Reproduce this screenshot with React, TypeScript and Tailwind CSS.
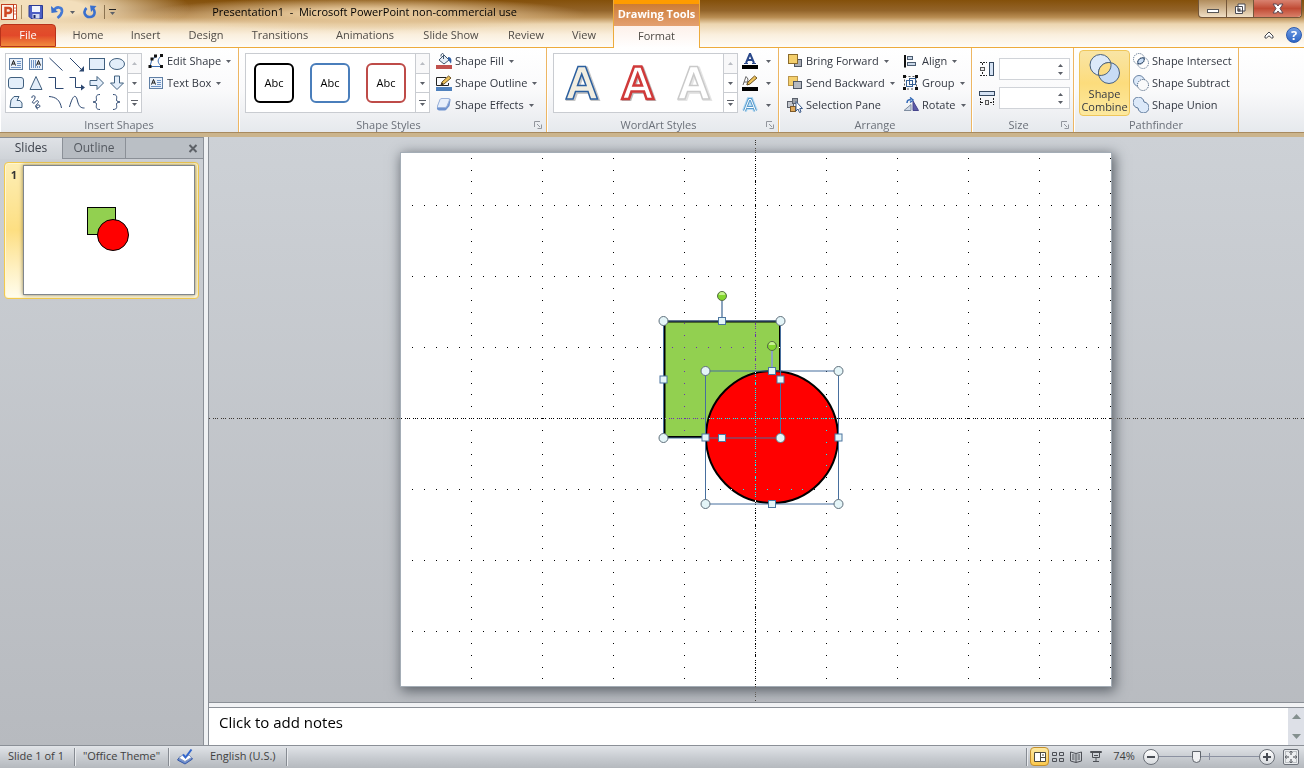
import type { ReactNode } from "react";

const shapeFill = "#e3eefa";
const shapeLine = "#41607f";

const galleryShapes: { name: string; icon: ReactNode }[] = [
  {
    name: "Text Box",
    icon: (
      <>
        <rect x="1.5" y="2.5" width="13" height="11" fill="#eaf1fa" stroke="#5f7fa5" />
        <path d="M3.5 9.5 L5.5 4.5 L7.5 9.5 M4.5 8 H6.5" fill="none" stroke="#111" />
        <path d="M9 5.5 H13 M9 7.5 H13 M3 9.5 M9 9.5 H13 M3 11.5 H13" stroke="#6f93c4" />
      </>
    ),
  },
  {
    name: "Vertical Text Box",
    icon: (
      <>
        <rect x="1.5" y="2.5" width="13" height="11" fill="#eaf1fa" stroke="#5f7fa5" />
        <path d="M8.5 9.5 L10.5 4.5 L12.5 9.5 M9.5 8 H11.5" fill="none" stroke="#111" />
        <path d="M3.5 4 V12 M5.5 4 V12 M7.5 4 V12 M9.5 10 V12 M11.5 10 V12" stroke="#6f93c4" />
      </>
    ),
  },
  { name: "Line", icon: <path d="M1.5 2 L14.5 14.5" stroke="#2c4770" /> },
  {
    name: "Arrow",
    icon: (
      <>
        <path d="M1 2 L13 14" stroke="#2c4770" />
        <path d="M15 15.5 V10 L10 15.5 Z" fill="#2c4770" />
      </>
    ),
  },
  { name: "Rectangle", icon: <rect x="0.5" y="2.5" width="15" height="11" fill={shapeFill} stroke={shapeLine} /> },
  { name: "Oval", icon: <ellipse cx="8" cy="8" rx="7.5" ry="5.5" fill={shapeFill} stroke={shapeLine} /> },
  { name: "Rounded Rectangle", icon: <rect x="0.5" y="2.5" width="15" height="11" rx="2.5" fill={shapeFill} stroke={shapeLine} /> },
  { name: "Triangle", icon: <path d="M8 1.5 L14 14.5 H2 Z" fill={shapeFill} stroke={shapeLine} /> },
  { name: "Elbow Connector", icon: <path d="M0.5 2.5 H7.5 V13.5 H15.5" fill="none" stroke="#2c4770" /> },
  {
    name: "Elbow Arrow",
    icon: (
      <>
        <path d="M0.5 2.5 H6.5 V12.5 H13" fill="none" stroke="#2c4770" />
        <path d="M12 9.5 L16 12.5 L12 15.5 Z" fill="#2c4770" />
      </>
    ),
  },
  { name: "Right Arrow", icon: <path d="M1 5.5 H8 V1.5 L14.5 8 L8 14.5 V10.5 H1 Z" fill={shapeFill} stroke={shapeLine} /> },
  { name: "Down Arrow", icon: <path d="M5.5 1 V8 H1.5 L8 14.5 L14.5 8 H10.5 V1 Z" fill={shapeFill} stroke={shapeLine} /> },
  { name: "Freeform", icon: <path d="M2 13.5 L3 6 L6 2.5 H11 L9 6.5 H12 L14 9 V13.5 Z" fill={shapeFill} stroke={shapeLine} /> },
  {
    name: "Scribble",
    icon: <path d="M4 4 C3 1 8 1 7 4 C6 7 3 8 5 9 C8 10 8 5 10 7 C12 9 6 11 8 13 C10 15 14 12 11 11 C8 10 7 15 10 15" fill="none" stroke="#2c4770" />,
  },
  { name: "Arc", icon: <path d="M1 2.5 C8 3 12 6 13.5 14" fill="none" stroke="#2c4770" /> },
  { name: "Curve", icon: <path d="M0.5 13 C4 0 7 0 8.5 7 C10 13 12 14 15.5 14" fill="none" stroke="#2c4770" /> },
  { name: "Left Brace", icon: <path d="M11 0.5 C6 0.5 7.500 4 7.500 6 C7.500 7.500 5 8 4 8 C5 8 7.500 8.500 7.500 10 C7.500 12 6 15.5 11 15.5" fill="none" stroke="#2c4770" /> },
  { name: "Right Brace", icon: <path d="M4 0.5 C9 0.5 7.500 4 7.500 6 C7.500 7.500 10 8 11 8 C10 8 7.500 8.500 7.500 10 C7.500 12 9 15.5 4 15.5" fill="none" stroke="#2c4770" /> },
];

const tabs = [
  { name: "Home", width: "w-[58px]" },
  { name: "Insert", width: "w-[57px]" },
  { name: "Design", width: "w-16" },
  { name: "Transitions", width: "w-[84px]" },
  { name: "Animations", width: "w-[86px]" },
  { name: "Slide Show", width: "w-[86px]" },
  { name: "Review", width: "w-16" },
  { name: "View", width: "w-[52px]" },
];

function Icon({ children, size = 16 }: { children: ReactNode; size?: number }) {
  return (
    <svg width={size} height={size} viewBox="0 0 16 16" fill="none" className="shrink-0" aria-hidden="true">
      {children}
    </svg>
  );
}

function Caret({ up = false, light = false }: { up?: boolean; light?: boolean }) {
  return (
    <svg width="5" height="3" viewBox="0 0 5 3" className="shrink-0" aria-hidden="true">
      <path d={up ? "M0 3 L2.5 0 L5 3 Z" : "M0 0 L2.5 3 L5 0 Z"} fill={light ? "#b9bcc2" : "#5c6068"} />
    </svg>
  );
}

function RibbonGroup({ label, launcher, className, children }: { label: string; launcher?: boolean; className: string; children: ReactNode }) {
  return (
    <section
      aria-label={label}
      className={`flex shrink-0 flex-col border-r border-[#edb663] shadow-[inset_1px_0_0_#ffffff] ${className}`}
    >
      <div className="flex h-[69px] items-start pt-0.5">{children}</div>
      <div className="flex h-[15px] items-center px-1 text-[#6b7079]">
        <span className="flex-1 text-center leading-[15px]">{label}</span>
        {launcher && (
          <button type="button" aria-label={`${label} options`}>
            <svg width="8" height="8" viewBox="0 0 8 8" fill="none">
              <path d="M0.5 6 V0.5 H6 M3 3 L6 6 M7.5 3.5 V7.5 H3.5" stroke="#92969d" />
            </svg>
          </button>
        )}
      </div>
    </section>
  );
}

function ToolButton({ icon, label, menu = true }: { icon: ReactNode; label: string; menu?: boolean }) {
  return (
    <button type="button" className="flex h-[22px] items-center gap-[3px] whitespace-nowrap text-[#333842]">
      <Icon>{icon}</Icon>
      <span>{label}</span>
      {menu && <span className="pl-0.5"><Caret /></span>}
    </button>
  );
}

function GalleryScroller() {
  return (
    <div className="flex w-3.5 shrink-0 flex-col border-l border-[#c9ccd1]">
      <button type="button" aria-label="Previous row" className="flex flex-1 items-center justify-center bg-[#f8f8f9]"><Caret up light /></button>
      <button type="button" aria-label="Next row" className="flex flex-1 items-center justify-center border-y border-[#c9ccd1]"><Caret /></button>
      <button type="button" aria-label="More" className="flex flex-1 flex-col items-center justify-center gap-0.5">
        <span className="h-px w-[7px] bg-[#5c6068]" />
        <Caret />
      </button>
    </div>
  );
}

function WordArt({ fill, stroke, glow, weight, name }: { fill: string; stroke: string; glow: string; weight: number; name: string }) {
  return (
    <button type="button" aria-label={name} className="flex h-full w-14 items-center justify-center">
      <svg width="40" height="42" viewBox="0 0 40 42" aria-hidden="true">
        <path
          d="M17.500 5.500 H25 L37 38 H29.500 L27.500 31 H15 L12.500 38 H5 Z M21.200 13 L17 25 H25.500 Z"
          fill={glow}
          stroke={glow}
          strokeWidth="2"
          fillRule="evenodd"
          opacity="0.3"
        />
        <path d="M16 4.500 H23.500 L35.500 37 H28.500 L26 29.500 H13.500 L11 37 H4 Z M19.700 12 L15.500 23.500 H24 Z" fill={fill} fillRule="evenodd" stroke={stroke} strokeWidth={weight} />
      </svg>
    </button>
  );
}

function SizeField({ id, label, icon }: { id: string; label: string; icon: ReactNode }) {
  return (
    <div className="flex items-center gap-1">
      <label htmlFor={id} title={label}><Icon>{icon}</Icon></label>
      <div className="flex h-[22px] w-[71px] border border-[#d0d3d8] bg-white">
        <input id={id} aria-label={label} className="w-0 flex-1 px-1 outline-none" />
        <div className="flex w-[18px] flex-col py-0.5">
          <button type="button" aria-label={`Increase ${label}`} className="flex flex-1 items-center justify-center"><Caret up /></button>
          <button type="button" aria-label={`Decrease ${label}`} className="flex flex-1 items-center justify-center"><Caret /></button>
        </div>
      </div>
    </div>
  );
}

function TitleBar() {
  return (
    <header className="flex h-12 shrink-0 overflow-hidden bg-[radial-gradient(ellipse_150px_30px_at_40px_8px,#f3dfbc_30%,transparent),radial-gradient(ellipse_220px_17px_at_365px_14px,#e3c496_30%,transparent),linear-gradient(#84500a,#93642a_22%,#b98d52_36%,#ecd5b0_50%,#faefdd_72%,#fffdf9)]">
      <div className="flex w-[613px] shrink-0 flex-col border-b border-[#edab3c]">
        <div className="flex h-6 items-center">
          <div className="flex w-[120px] shrink-0 items-center pl-px">
            <Icon>
              <path d="M4 0.5 H15.5 V15.5 H4" fill="#fff" stroke="#c85232" />
              <rect x="0.5" y="0.5" width="12" height="15" fill="#fbeee6" stroke="#c23d1e" />
              <path d="M4.5 13 V4 H7.500 C11 4 11 9 7.500 9 H4.500" stroke="#cf4722" strokeWidth="2.500" />
              <path d="M13 4 H15 M13 7 H15 M13 10 H15" stroke="#dc8266" />
            </Icon>
            <span className="ml-1 h-3.5 w-px bg-[#a58c64]" />
            <button type="button" aria-label="Save" className="ml-1.5">
              <Icon>
                <path d="M1 1.500 H14.500 V14.500 H3 L1 12.500 Z" fill="#4c5fc4" stroke="#2c3c94" />
                <rect x="4" y="2" width="8" height="6" fill="#f2f6fd" />
                <rect x="4.500" y="10" width="7" height="4.500" fill="#d3daf0" />
                <rect x="5.500" y="11" width="2" height="3" fill="#1c2a6b" />
              </Icon>
            </button>
            <button type="button" aria-label="Undo" className="ml-1.5">
              <Icon>
                <path d="M4 6.500 C6 2 12.500 2.500 12 7.500 C11.500 10.500 9.500 12.500 7.500 14" stroke="#4478d4" strokeWidth="2.600" />
                <path d="M1 2 L1.500 9 L8 8 Z" fill="#3a70ce" />
              </Icon>
            </button>
            <button type="button" aria-label="Undo list" className="ml-1"><Caret /></button>
            <button type="button" aria-label="Repeat" className="ml-[7px]">
              <Icon>
                <path d="M4.500 4 C0 8.500 4 13.500 8 13 C12.500 13 14 8 11 4.500" stroke="#3a70ce" strokeWidth="2.600" />
                <path d="M14.500 2 L8 1.500 L9 8 Z" fill="#3a70ce" />
              </Icon>
            </button>
            <span className="ml-1.5 h-3.5 w-px bg-[#8b7350]" />
            <button type="button" aria-label="Customize Quick Access Toolbar" className="ml-1 flex flex-col items-center gap-0.5">
              <span className="h-px w-[7px] bg-[#222]" />
              <Caret />
            </button>
          </div>
          <h1 className="flex-1 whitespace-pre pr-1 text-center text-[11px] text-black">Presentation1  -  Microsoft PowerPoint non-commercial use</h1>
        </div>
        <nav className="flex h-[23px] text-[11px] text-[#4f4b46]">
          <button type="button" className="w-14 shrink-0 rounded-t-sm border border-[#b8321a] bg-linear-to-b from-[#e0522c] via-[#e2492a] to-[#f08a3c] text-white">File</button>
          <span className="w-[3px] shrink-0" />
          {tabs.map((tab) => (
            <button key={tab.name} type="button" className={`shrink-0 whitespace-nowrap ${tab.width}`}>{tab.name}</button>
          ))}
        </nav>
      </div>
      <div className="flex w-[87px] shrink-0 flex-col border-x border-[#edab3c] text-center text-[11px]">
        <div className="h-[26px] border-t-4 border-[#ff9c00] bg-linear-to-b from-[#cd7c33] to-[#e4a070] pt-0.5 leading-4 font-bold whitespace-nowrap text-white">Drawing Tools</div>
        <button type="button" className="flex-1 bg-linear-to-b from-[#fdf1ea] to-white pb-0.5 text-[#4f4b46]">Format</button>
      </div>
      <div className="flex flex-1 flex-col items-end justify-between border-b border-[#edab3c]">
        <div className="mr-0.5 flex h-[18px] divide-x divide-[#74573a] rounded-b-sm border border-t-0 border-[#74573a] bg-linear-to-b from-[#b18d5d] to-[#f0dfc5]">
          <button type="button" aria-label="Minimize" className="flex w-7 items-end justify-center pb-1">
            <span className="h-1 w-3 border border-[#555] bg-white" />
          </button>
          <button type="button" aria-label="Restore" className="flex w-[27px] items-center justify-center">
            <svg width="12" height="12" viewBox="0 0 12 12" fill="none">
              <path d="M4 1 H11 V8 H4 Z M1.500 3.500 H8.500 V10.500 H1.500 Z" fill="#fff" stroke="#4a4a52" />
              <rect x="4" y="6" width="2" height="2" fill="#a68155" stroke="#4a4a52" />
            </svg>
          </button>
          <button type="button" aria-label="Close" className="flex w-[47px] items-center justify-center rounded-br-sm bg-linear-to-b from-[#d98270] via-[#c04a34] to-[#d98069]">
            <svg width="12" height="11" viewBox="0 0 12 11">
              <path d="M1 1 H4.500 L6 3 L7.500 1 H11 L8 5.500 L11 10 H7.500 L6 8 L4.500 10 H1 L4 5.500 Z" fill="#fff" stroke="#5d4650" />
            </svg>
          </button>
        </div>
        <div className="mb-1 flex items-center gap-3 pr-0.5">
          <button type="button" aria-label="Minimize the Ribbon">
            <svg width="10" height="8" viewBox="0 0 10 8" fill="#fff" stroke="#44464c">
              <path d="M5 1 L9 5 V7 H7.500 L5 4.800 L2.500 7 H1 V5 Z" />
            </svg>
          </button>
          <button type="button" aria-label="Help" className="size-4 rounded-full border border-[#2c5bb0] bg-linear-to-b from-[#6e9be2] to-[#2e66c6] text-[13px] leading-[14px] font-bold text-white">?</button>
        </div>
      </div>
    </header>
  );
}

const letterA = "M4 10 L8 0.500 L12 10 M5.500 7 H10.500";

function Ribbon() {
  return (
    <div className="flex h-[85px] shrink-0 overflow-hidden border-b border-[#a78a60] bg-linear-to-b from-white via-[#fafafb] to-[#e6e9ed] text-[11px]">
      <RibbonGroup label="Insert Shapes" className="w-[239px]">
        <div className="mt-[3px] ml-[5px] flex h-[60px] w-[137px] border border-[#c9ccd1] bg-white">
          <div className="grid flex-1 grid-cols-6">
            {galleryShapes.map((shape) => (
              <button key={shape.name} type="button" aria-label={shape.name} className="flex items-center justify-center">
                <Icon>{shape.icon}</Icon>
              </button>
            ))}
          </div>
          <GalleryScroller />
        </div>
        <div className="ml-1.5 flex flex-col">
          <ToolButton
            label="Edit Shape"
            icon={
              <>
                <path d="M2 13.500 L4 6 L8 4 M13.500 2.500 C9 7 9 9 13.500 13.500 H2" stroke="#3b6fb5" />
                <path d="M0.500 12 H3.500 V15 H0.500 Z M2.500 4.500 H5.500 V7.500 H2.500 Z M6 1.500 H9 V4.500 H6 Z M12 1 H15 V4 H12 Z M12 12 H15 V15 H12 Z" fill="#111" />
              </>
            }
          />
          <ToolButton label="Text Box" icon={galleryShapes[0].icon} />
        </div>
      </RibbonGroup>

      <RibbonGroup label="Shape Styles" launcher className="w-[308px]">
        <div className="mt-[3px] ml-1.5 flex h-[60px] w-[185px] border border-[#c9ccd1] bg-white">
          <div className="flex flex-1 items-center text-black">
            <button type="button" className="ml-2 h-10 w-10 rounded-md border-2 border-black">Abc</button>
            <button type="button" className="ml-4 h-10 w-10 rounded-md border-2 border-[#4a7ebb]">Abc</button>
            <button type="button" className="ml-4 h-10 w-10 rounded-md border-2 border-[#be4b48]">Abc</button>
          </div>
          <GalleryScroller />
        </div>
        <div className="ml-1.5 flex flex-col">
          <ToolButton
            label="Shape Fill"
            icon={
              <>
                <path d="M3 7 L8 2 L13 7 L8 11 Z" fill="#e5edf6" stroke="#41566e" />
                <path d="M7.500 6 V1.500 C7.500 -0.500 4.500 0.500 5 3.500" stroke="#41566e" />
                <path d="M12 4 C15.500 4 16 7 15 10.500 C13.500 9.500 13.500 7 12 7 Z" fill="#2f5fa5" />
                <rect y="12" width="16" height="4" fill="#c0504d" />
              </>
            }
          />
          <ToolButton
            label="Shape Outline"
            icon={
              <>
                <path d="M10 2.500 H0.500 V10.500 H12.500 V8" stroke="#222" />
                <path d="M5 10 L6 7 L12.500 1 L15 3 L8 9 Z" fill="#efc35a" stroke="#6d5323" />
                <path d="M5 10 L6 7.500 L7.500 9 Z" fill="#222" />
                <rect y="12" width="16" height="4" fill="#4f81bd" />
              </>
            }
          />
          <ToolButton
            label="Shape Effects"
            icon={
              <>
                <path d="M1 10 L4 2.500 Q4.500 1.500 6 1.500 H13 Q15 1.500 14.500 3 L13.500 9 L10.500 12.500 Q10 13.500 8.500 13.500 H3 Q0.500 13 1 10 Z" fill="#6f93d0" />
                <path d="M1.500 9 L4 2.500 Q4.500 1.500 6 1.500 H12 Q14 1.500 13.500 3 L11 9 Q10.500 10.500 9 10.500 H2.500 Q1 10.500 1.500 9 Z" fill="#e7effb" stroke="#9bb2da" />
              </>
            }
          />
        </div>
      </RibbonGroup>

      <RibbonGroup label="WordArt Styles" launcher className="w-[232px]">
        <div className="mt-[3px] ml-1.5 flex h-[60px] w-[185px] border border-[#c9ccd1] bg-white">
          <div className="flex flex-1 items-center">
            <WordArt name="Tan fill, blue outline" fill="#f1ede0" stroke="#2b5f9f" glow="#444444" weight={1.5} />
            <WordArt name="White fill, red outline" fill="#ffffff" stroke="#d03a3a" glow="#222222" weight={2.5} />
            <WordArt name="White fill, shadow" fill="#ffffff" stroke="#c9c9c9" glow="#aaaaaa" weight={1.5} />
          </div>
          <GalleryScroller />
        </div>
        <div className="ml-1 flex flex-col">
          <ToolButton
            label=""
            icon={
              <>
                <path d={letterA} stroke="#2c4a8c" strokeWidth="2" />
                <path d="M2 10.500 H6 M10 10.500 H14" stroke="#2c4a8c" />
                <rect y="12" width="16" height="4" fill="#000" />
              </>
            }
          />
          <ToolButton
            label=""
            icon={
              <>
                <path d="M1 10 L4 1.500 L6 4 L5 10 M2 7 H5" stroke="#666" />
                <path d="M5 10 L6 7 L12.500 1 L15 3 L8 9 Z" fill="#efc35a" stroke="#6d5323" />
                <rect y="12" width="16" height="4" fill="#000" />
              </>
            }
          />
          <ToolButton
            label=""
            icon={
              <>
                <path d="M2.500 14 L7 2.500 H9 L13.500 14 M4.500 10.500 H11.500" stroke="#b5dcf6" strokeWidth="5" />
                <path d="M2.500 14 L7 2.500 H9 L13.500 14 M4.500 10.500 H11.500" stroke="#5a9ccc" strokeWidth="3" />
                <path d="M2.500 14 L7 2.500 H9 L13.500 14 M4.500 10.500 H11.500" stroke="#fff" />
              </>
            }
          />
        </div>
      </RibbonGroup>

      <RibbonGroup label="Arrange" className="w-[193px]">
        <div className="ml-2 flex w-[116px] flex-col">
          <ToolButton
            label="Bring Forward"
            icon={
              <>
                <rect x="7.500" y="6.500" width="7" height="7" fill="#a9adb5" stroke="#4d5563" />
                <rect x="1.500" y="1.500" width="9" height="9" fill="#f4cf6c" stroke="#8a6a2a" />
              </>
            }
          />
          <ToolButton
            label="Send Backward"
            icon={
              <>
                <rect x="1.500" y="1.500" width="9" height="9" fill="#f4cf6c" stroke="#b9954b" />
                <rect x="6.500" y="6.500" width="8" height="7" fill="#b6bac1" stroke="#4d5563" />
              </>
            }
          />
          <ToolButton
            menu={false}
            label="Selection Pane"
            icon={
              <>
                <rect x="0.500" y="4.500" width="6" height="6" fill="#c2c6cd" stroke="#5b616b" />
                <rect x="5.500" y="1.500" width="5" height="5" fill="#9ca2ab" stroke="#5b616b" />
                <rect x="3.500" y="9.500" width="5" height="5" fill="#e0a95a" stroke="#7d5a28" />
                <path d="M9 4.500 V14 L11 12 L12.500 15.500 L14 15 L12.800 11.500 H15.500 Z" fill="#fff" stroke="#3c5c8c" />
              </>
            }
          />
        </div>
        <div className="flex flex-col">
          <ToolButton
            label="Align"
            icon={
              <>
                <path d="M2 2 V14.500" stroke="#111" strokeWidth="2" />
                <rect x="4.500" y="3.500" width="5" height="3" fill="#c9d7e8" stroke="#4b5c70" />
                <rect x="4.500" y="9.500" width="8" height="3" fill="#c9d7e8" stroke="#4b5c70" />
              </>
            }
          />
          <ToolButton
            label="Group"
            icon={
              <>
                <path d="M1.500 1.500 H13.500 V14 H1.500 Z" stroke="#555" strokeDasharray="2 2" />
                <rect x="3.500" y="5.500" width="6" height="6" stroke="#355f93" />
                <rect x="6.500" y="3.500" width="6" height="6" stroke="#355f93" />
                <path d="M0 0 H3 V3 H0 Z M12 0 H15 V3 H12 Z M0 12 H3 V15 H0 Z M12 12 H15 V15 H12 Z" fill="#111" />
              </>
            }
          />
          <ToolButton
            label="Rotate"
            icon={
              <>
                <path d="M1 13.500 L8 7.500 V13.500 Z" fill="#cfd8e6" stroke="#7f8da0" />
                <path d="M10 4 L15.500 13.500 H10 Z" fill="#5b5aa8" stroke="#46458c" />
                <path d="M4 6 C4 3 6 2.500 8 3 M7 0.500 L10 3 L7 5.500" stroke="#2f66b5" strokeWidth="1.500" />
              </>
            }
          />
        </div>
      </RibbonGroup>

      <RibbonGroup label="Size" launcher className="w-[102px]">
        <div className="mt-2 ml-[7px] flex flex-col gap-[7px]">
          <SizeField
            id="shape-height"
            label="Shape Height"
            icon={
              <>
                <rect x="10.500" y="1.500" width="4" height="13" fill="#d5e2f3" stroke="#33475f" />
                <path d="M1 1.500 H8 M1 14.500 H8 M3.500 2 V5 M3.500 11 V14" stroke="#222" strokeDasharray="2 1" />
                <rect x="1.500" y="6.500" width="4" height="3" fill="#eee" stroke="#555" />
              </>
            }
          />
          <SizeField
            id="shape-width"
            label="Shape Width"
            icon={
              <>
                <rect x="0.500" y="1.500" width="15" height="4" fill="#d5e2f3" stroke="#33475f" />
                <path d="M1.500 8 V15 M14.500 8 V15 M2 12.500 H5 M11 12.500 H14" stroke="#222" strokeDasharray="2 1" />
                <rect x="6.500" y="10.500" width="3" height="4" fill="#eee" stroke="#555" />
              </>
            }
          />
        </div>
      </RibbonGroup>

      <RibbonGroup label="Pathfinder" className="w-[165px]">
        <button type="button" className="ml-[5px] flex h-[66px] w-[51px] shrink-0 flex-col items-center rounded-sm border border-[#efc65a] bg-linear-to-b from-[#f9e5a5] via-[#fcdc7c] to-[#fce99f] text-[#333842]">
          <svg width="32" height="34" viewBox="0 0 32 34" aria-hidden="true" className="mt-0.5">
            <circle cx="11.500" cy="12" r="10.500" fill="#dce9f9" stroke="#48607e" />
            <circle cx="20" cy="20" r="10.500" fill="#c8dcf5" stroke="#48607e" />
            <path d="M9.700 22.300 A10.500 10.500 0 0 1 21.800 9.700 A10.500 10.500 0 0 1 9.700 22.300 Z" fill="#fbdc84" stroke="#48607e" />
          </svg>
          <span className="leading-[13px]">Shape Combine</span>
        </button>
        <div className="ml-[3px] flex flex-col">
          <ToolButton
            menu={false}
            label="Shape Intersect"
            icon={
              <>
                <circle cx="6" cy="6" r="5.500" stroke="#48607e" strokeDasharray="1 1" />
                <circle cx="10" cy="10" r="5.500" stroke="#48607e" strokeDasharray="1 1" />
                <path d="M5 10.500 C4 7 7 4.500 11 5 C12 8 9 11.500 5 10.500 Z" fill="#c8dcf5" stroke="#2d4868" />
              </>
            }
          />
          <ToolButton
            menu={false}
            label="Shape Subtract"
            icon={
              <>
                <circle cx="6" cy="6" r="5.500" fill="#dce9f9" stroke="#6a83a3" />
                <circle cx="10" cy="10" r="5.500" fill="#fafafb" stroke="#2d4868" strokeDasharray="1 1" />
              </>
            }
          />
          <ToolButton
            menu={false}
            label="Shape Union"
            icon={<path d="M11 5 A5.500 5.500 0 1 0 5 11 A5.500 5.500 0 1 0 11 5 Z" fill="#dce9f9" stroke="#5a7699" />}
          />
        </div>
      </RibbonGroup>
    </div>
  );
}

function SlidePanel() {
  return (
    <aside className="flex w-[204px] shrink-0 flex-col border-r border-[#8b9097]">
      <div className="flex h-[22px] shrink-0 border-t border-[#8b9097]">
        <button type="button" className="w-[62px] bg-linear-to-b from-[#dfe2e6] to-[#cfd3d8] pb-0.5 text-[#3c414b]">Slides</button>
        <button type="button" className="w-16 border-x border-b border-[#8b9097] bg-[#b6bbc1] pb-px text-[#53585f]">Outline</button>
        <div className="flex flex-1 items-center justify-end border-b border-[#8b9097] bg-[#babfc5] pr-[5px]">
          <button type="button" aria-label="Close pane">
            <svg width="10" height="9" viewBox="0 0 10 9">
              <path d="M1.500 1 L8.500 8 M8.500 1 L1.500 8" stroke="#5d6167" strokeWidth="2" />
            </svg>
          </button>
        </div>
      </div>
      <button
        type="button"
        aria-label="Slide 1"
        className="mt-[3px] ml-1 flex h-[137px] w-[195px] items-start rounded-sm border border-[#f2c94e] bg-linear-to-b from-[#fdeeb5] via-[#fddf82] to-[#fffdee] pt-0.5 shadow-[inset_0_0_0_1px_#fff7d0]"
      >
        <span className="w-[18px] text-center text-[11px] leading-5 font-bold text-[#333]">1</span>
        <svg width="172" height="130" viewBox="0 0 170 128" className="border border-[#80868d] bg-white shadow-[0_0_4px_#8a7d50]">
          <rect x="63.500" y="41.500" width="28" height="27" fill="#92d050" stroke="#000" />
          <circle cx="89" cy="69" r="15.500" fill="#ff0000" stroke="#000" />
        </svg>
      </button>
    </aside>
  );
}

const step = 71;
const dotOffsets = [0, 12, 24, 36, 47, 59];

function gridDots() {
  const dots: [number, number][] = [];
  for (let col = 0; col < 10; col++) {
    for (let row = -1; row < 7; row++) {
      for (const offset of dotOffsets) {
        const y = 52 + row * step + offset;
        if (y > 3 && y < 528) dots.push([70 + col * step, y]);
      }
    }
  }
  for (let row = 0; row < 7; row++) {
    if (row === 3) continue;
    for (let col = -1; col < 10; col++) {
      for (const offset of dotOffsets.slice(1)) {
        const x = 70 + col * step + offset;
        if (x > 10 && x < 710) dots.push([x, 52 + row * step]);
      }
    }
  }
  return dots;
}

function Selection({ x, y, size }: { x: number; y: number; size: number }) {
  const mid = size / 2;
  const corners = [[0, 0], [size, 0], [0, size], [size, size]];
  const sides = [[mid, 0], [0, mid], [size, mid], [mid, size]];
  return (
    <g transform={`translate(${x} ${y})`}>
      <rect width={size} height={size} fill="none" stroke="#476f9e" />
      <path d={`M${mid} 0 V-20`} stroke="#8aa3be" strokeWidth="2" />
      <circle cx={mid} cy="-25" r="4.500" fill="#83d62e" stroke="#566b48" />
      <path d={`M${mid - 3} -26 A3 3 0 0 1 ${mid + 3} -26 Z`} fill="#c5f08e" />
      {corners.map(([cx, cy]) => (
        <circle key={`${cx}-${cy}`} cx={cx} cy={cy} r="4.500" fill="#e4f5f8" stroke="#5f6f7b" />
      ))}
      {sides.map(([cx, cy]) => (
        <rect key={`${cx}-${cy}`} x={cx - 3.5} y={cy - 3.5} width="7" height="7" fill="#e4f5f8" stroke="#4c759f" />
      ))}
    </g>
  );
}

function SlideCanvas() {
  return (
    <main className="flex min-h-0 flex-1 items-center justify-center overflow-hidden pr-px">
      <svg
        width="710"
        height="533"
        viewBox="0 0 710 533"
        role="img"
        aria-label="Slide 1"
        className="shrink-0 overflow-visible bg-white shadow-[0_0_0_1px_#a4adb6,2px_3px_12px_2px_#5d636a]"
      >
        <rect x="263.500" y="168.500" width="115.500" height="115.500" fill="#92d050" stroke="#000" strokeWidth="2" />
        <circle cx="371" cy="284" r="66" fill="#ff0000" stroke="#000" strokeWidth="2" />
        <g className="mix-blend-difference" shapeRendering="crispEdges">
          {gridDots().map(([x, y]) => (
            <rect key={`${x}-${y}`} x={x} y={y} width="1" height="1" fill="#fff" />
          ))}
          <path d="M354.500 -1997 V2000" stroke="#fff" strokeDasharray="1 1 1 1 1 3" />
          <path d="M-1996 265.500 H2000" stroke="#fff" strokeDasharray="1 1 1 1 1 3" />
        </g>
        <Selection x={262.5} y={168} size={117} />
        <Selection x={304.5} y={218} size={133} />
      </svg>
    </main>
  );
}

function Notes() {
  return (
    <div className="flex h-[43px] shrink-0 border-t border-[#8b9097] bg-[#f1f2f4] pt-1">
      <div className="flex flex-1 border-t border-[#8b9097] bg-white">
        <textarea aria-label="Notes" placeholder="Click to add notes" className="flex-1 resize-none px-2.5 pt-0.5 text-[15px] leading-6 outline-none placeholder:text-black" />
        <div className="flex w-4 flex-col items-center justify-between bg-[#dde0e7] py-1.5">
          <button type="button" aria-label="Scroll up">
            <svg width="9" height="5" viewBox="0 0 9 5" className="block"><path d="M0 5 L4.500 0 L9 5 Z" fill="#84908f" /></svg>
          </button>
          <button type="button" aria-label="Scroll down">
            <svg width="9" height="5" viewBox="0 0 9 5" className="block"><path d="M0 0 L4.500 5 L9 0 Z" fill="#84908f" /></svg>
          </button>
        </div>
      </div>
    </div>
  );
}

function Separator() {
  return <span className="h-[18px] w-px shrink-0 bg-[#868b92] shadow-[1px_0_0_#e9ebee]" />;
}

function StatusBar() {
  return (
    <footer className="flex h-[23px] shrink-0 items-center border-t border-[#8b9097] bg-linear-to-b from-[#e1e4e8] via-[#c9cdd2] to-[#b5b9be] pb-px text-[11px] text-[#3f3f3f]">
      <span className="w-[74px] pl-2 whitespace-nowrap">Slide 1 of 1</span>
      <Separator />
      <span className="w-[93px] text-center whitespace-nowrap">"Office Theme"</span>
      <Separator />
      <button type="button" aria-label="Spelling" className="ml-2">
        <Icon>
          <path d="M0.500 11 L3 7.500 L8 10 L13 7 L15.500 10 L8 15 Z" fill="#6d8ed0" stroke="#3759a5" />
          <path d="M2 9 L6 5.500 L8.500 8 L12 6 L14.500 8.500 L8 12.500 Z" fill="#fff" stroke="#8a9cc0" />
          <path d="M6 5.500 L8.500 8.500 L14.500 0.500" stroke="#3266cc" strokeWidth="2" />
        </Icon>
      </button>
      <button type="button" className="ml-[17px] w-[76px] text-left whitespace-nowrap">English (U.S.)</button>
      <Separator />
      <span className="flex-1" />
      <Separator />
      <button type="button" aria-label="Normal" className="ml-[3px] flex size-[19px] items-center justify-center rounded-sm border border-[#c48f2c] bg-linear-to-b from-[#fde9a0] to-[#fbc94d]">
        <svg width="12" height="10" viewBox="0 0 12 10" fill="#fff" stroke="#4d4a3e">
          <path d="M0.500 0.500 H11.500 V9.500 H0.500 Z M6.500 0.500 V9.500 M6.500 5.500 H11.500 M8 3 H10" />
        </svg>
      </button>
      <button type="button" aria-label="Slide Sorter" className="ml-[3px]">
        <svg width="12" height="10" viewBox="0 0 12 10" fill="none" stroke="#4d5056">
          <path d="M0.500 0.500 H4.500 V3.500 H0.500 Z M7.500 0.500 H11.500 V3.500 H7.500 Z M0.500 6.500 H4.500 V9.500 H0.500 Z M7.500 6.500 H11.500 V9.500 H7.500 Z" />
        </svg>
      </button>
      <button type="button" aria-label="Reading View" className="ml-1.5">
        <svg width="12" height="12" viewBox="0 0 12 12" fill="none" stroke="#4d5056">
          <path d="M0.500 1 L6 2.500 L11.500 1 V10 L6 11.500 L0.500 10 Z M6 2.500 V11.500 M2 4 H4.500 M2 6 H4.500 M2 8 H4.500 M7.500 4 H10 M7.500 6 H10 M7.500 8 H10" />
        </svg>
      </button>
      <button type="button" aria-label="Slide Show View" className="ml-2">
        <svg width="12" height="11" viewBox="0 0 12 11" fill="none" stroke="#4d5056">
          <path d="M0.500 0.500 H11.500 V1.500 H0.500 Z M2.500 2 V6.500 H9.500 V2 M6 6.500 V10.500 M3 10.500 H9 M4 4.500 H8" />
        </svg>
      </button>
      <button type="button" className="ml-[5px] w-[34px] text-center">74%</button>
      <button type="button" aria-label="Zoom out" className="ml-0.5 flex size-4 items-center justify-center rounded-full border border-[#6b7078] bg-linear-to-b from-white to-[#d8dbdf]">
        <span className="h-0.5 w-2 bg-[#4a4e55]" />
      </button>
      <input
        type="range"
        aria-label="Zoom"
        defaultValue={36}
        className="h-4 w-[100px] appearance-none bg-[linear-gradient(#8b91a1,#8b91a1),linear-gradient(#8b91a1,#8b91a1)] bg-[length:100%_1px,1px_7px] bg-[position:0_50%,50%_50%] bg-no-repeat [&::-webkit-slider-thumb]:h-3 [&::-webkit-slider-thumb]:w-[9px] [&::-webkit-slider-thumb]:appearance-none [&::-webkit-slider-thumb]:rounded-b-full [&::-webkit-slider-thumb]:border [&::-webkit-slider-thumb]:border-[#5f646c] [&::-webkit-slider-thumb]:bg-[#f0f1f3]"
      />
      <button type="button" aria-label="Zoom in" className="flex size-4 items-center justify-center rounded-full border border-[#6b7078] bg-linear-to-b from-white to-[#d8dbdf]">
        <svg width="8" height="8" viewBox="0 0 8 8"><path d="M4 0 V8 M0 4 H8" stroke="#4a4e55" strokeWidth="2" /></svg>
      </button>
      <button type="button" aria-label="Fit slide to window" className="mr-[5px] ml-2">
        <Icon>
          <rect x="0.500" y="0.500" width="15" height="15" rx="1.500" fill="#eceef0" stroke="#6b7078" />
          <path d="M8 2 V6 M6.500 3.500 L8 2 L9.500 3.500 M8 10 V14 M6.500 12.500 L8 14 L9.500 12.500 M2 8 H6 M3.500 6.500 L2 8 L3.500 9.500 M10 8 H14 M12.500 6.500 L14 8 L12.500 9.500" stroke="#3c4047" />
          <rect x="2.500" y="2.500" width="11" height="11" stroke="#8b9097" strokeDasharray="1 1" />
        </Icon>
      </button>
    </footer>
  );
}

export default function App() {
  return (
    <div className="flex h-screen flex-col overflow-hidden bg-[#cbb48c] font-['Open_Sans','Noto_Sans',sans-serif] text-xs">
      <TitleBar />
      <Ribbon />
      <div className="mt-1 flex min-h-0 flex-1 bg-linear-to-b from-[#cdd1d6] to-[#b7babf]">
        <SlidePanel />
        <div className="ml-1 flex min-w-0 flex-1 flex-col border-l border-[#8b9097] shadow-[-4px_0_0_#eff1f3]">
          <SlideCanvas />
          <Notes />
        </div>
      </div>
      <StatusBar />
    </div>
  );
}
